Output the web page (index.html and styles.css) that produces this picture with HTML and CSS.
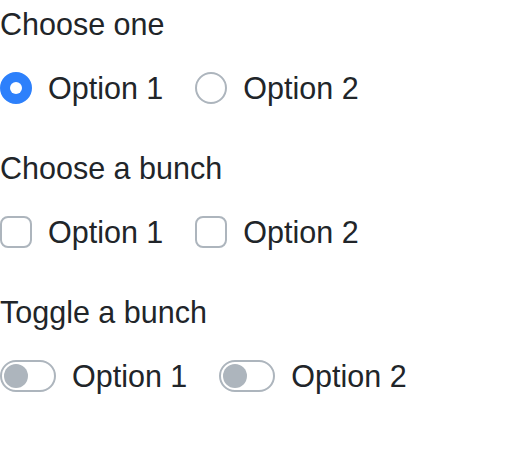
FILE: index.html
```html
<!DOCTYPE html>
<html>
<head>
<meta charset="utf-8">
<link rel="stylesheet" href="styles.css">
</head>
<body>
  <div class="form-group">
    <div class="group-label">Choose one</div>
    <div class="options">
      <label class="control"><span class="radio checked"></span><span>Option 1</span></label>
      <label class="control"><span class="radio"></span><span>Option 2</span></label>
    </div>
  </div>
  <div class="form-group">
    <div class="group-label">Choose a bunch</div>
    <div class="options">
      <label class="control"><span class="checkbox"></span><span>Option 1</span></label>
      <label class="control"><span class="checkbox"></span><span>Option 2</span></label>
    </div>
  </div>
  <div class="form-group">
    <div class="group-label">Toggle a bunch</div>
    <div class="options">
      <label class="control"><span class="switch"><span class="knob"></span></span><span>Option 1</span></label>
      <label class="control"><span class="switch"><span class="knob"></span></span><span>Option 2</span></label>
    </div>
  </div>
</body>
</html>
```

FILE: styles.css
```css
html, body {
  margin: 0;
  padding: 0;
  background: #ffffff;
}
body {
  font-family: "Liberation Sans", Arial, sans-serif;
  font-size: 30.5px;
  line-height: 48px;
  color: #212529;
}
.form-group {
  margin-bottom: 32px;
}
.group-label {
  margin-bottom: 16px;
}
.options {
  display: flex;
  gap: 32px;
}
.control {
  display: flex;
  align-items: flex-start;
  gap: 16px;
}
.radio, .checkbox, .switch {
  box-sizing: border-box;
  margin-top: 8px;
  height: 32px;
  flex: none;
  border: 2px solid #adb5bd;
  background: #ffffff;
}
.radio {
  width: 32px;
  border-radius: 50%;
  display: flex;
  align-items: center;
  justify-content: center;
}
.radio.checked {
  background: #2d80fb;
  border-color: #2d80fb;
}
.radio.checked::after {
  content: "";
  width: 12px;
  height: 12px;
  border-radius: 50%;
  background: #ffffff;
}
.checkbox {
  width: 32px;
  border-radius: 8px;
}
.switch {
  width: 56px;
  border-radius: 16px;
  padding: 2px;
  display: flex;
  align-items: center;
}
.knob {
  width: 24px;
  height: 24px;
  border-radius: 50%;
  background: #adb5bd;
}
```
